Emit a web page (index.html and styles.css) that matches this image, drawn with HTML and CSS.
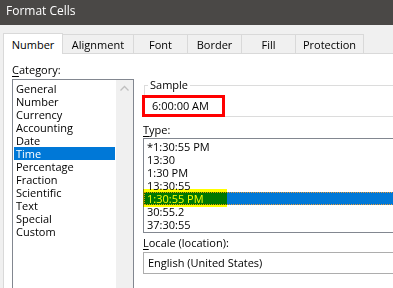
FILE: index.html
```html
<!DOCTYPE html>
<html>
<head>
<meta charset="utf-8">
<link rel="stylesheet" href="styles.css">
</head>
<body>
<div class="dialog">
  <div class="titlebar">Format Cells</div>
  <div class="tabs">
    <div class="tab active t-number">Number</div>
    <div class="tab t-align">Alignment</div>
    <div class="tab t-font">Font</div>
    <div class="tab t-border">Border</div>
    <div class="tab t-fill">Fill</div>
    <div class="tab t-prot last">Protection</div>
  </div>
  <div class="panel">
    <div class="col-left">
      <div class="label"><u>C</u>ategory:</div>
      <div class="listbox cat">
        <ul class="items">
          <li>General</li>
          <li>Number</li>
          <li>Currency</li>
          <li>Accounting</li>
          <li>Date</li>
          <li class="sel">Time</li>
          <li>Percentage</li>
          <li>Fraction</li>
          <li>Scientific</li>
          <li>Text</li>
          <li>Special</li>
          <li>Custom</li>
        </ul>
        <div class="scrollbar">
          <svg class="arrow" width="17" height="17" viewBox="0 0 17 17"><path d="M4.5 10.5 L8.5 6.5 L12.5 10.5" fill="none" stroke="#bfbfbf" stroke-width="1.3"/></svg>
        </div>
      </div>
    </div>
    <div class="col-right">
      <fieldset class="group">
        <legend>Sample</legend>
        <div class="sample">6:00:00 AM</div>
      </fieldset>
      <div class="label type-label"><u>T</u>ype:</div>
      <div class="listbox typelist">
        <ul class="items">
          <li>*1:30:55 PM</li>
          <li>13:30</li>
          <li>1:30 PM</li>
          <li>13:30:55</li>
          <li class="sel focus">1:30:55 PM<span class="highlight"></span></li>
          <li>30:55.2</li>
          <li>37:30:55</li>
        </ul>
      </div>
      <div class="label locale-label"><u>L</u>ocale (location):</div>
      <div class="combo">English (United States)</div>
    </div>
  </div>
</div>
</body>
</html>
```
FILE: styles.css
```css
html, body {
  margin: 0;
  padding: 0;
}
body {
  width: 393px;
  height: 288px;
  overflow: hidden;
  background: #f0f0f0;
  font-family: "Open Sans", "Noto Sans", sans-serif;
  font-size: 11px;
  color: #000;
}
.dialog {
  width: 393px;
  height: 288px;
  overflow: hidden;
  display: flex;
  flex-direction: column;
}
.titlebar {
  height: 25px;
  flex: none;
  background: #4a4846;
  color: #fff;
  font-size: 12px;
  line-height: 22px;
  padding-left: 6px;
  box-sizing: border-box;
}
.tabs {
  flex: none;
  display: flex;
  align-items: flex-end;
  margin-top: 8px;
  padding-left: 3px;
}
.tab {
  box-sizing: border-box;
  height: 19px;
  background: #f0f0f0;
  border-top: 1px solid #d9d9d9;
  border-left: 1px solid #d9d9d9;
  text-align: center;
  line-height: 18px;
  padding-top: 1px;
}
.tab.last {
  border-right: 1px solid #d9d9d9;
}
.tab.active {
  height: 21px;
  background: #fff;
  border-right: 1px solid #d9d9d9;
  margin-bottom: -1px;
  position: relative;
  z-index: 1;
  padding-top: 1px;
  line-height: 19px;
}
.tab.active + .tab {
  border-left: none;
}
.t-number { width: 60px; }
.t-align { width: 70px; }
.t-font { width: 54px; }
.t-border { width: 54px; }
.t-fill { width: 54px; }
.t-prot { width: 69px; }
.panel {
  flex: 1;
  margin-left: 3px;
  background: #fff;
  border-left: 1px solid #d9d9d9;
  border-top: 1px solid #d9d9d9;
  display: flex;
  padding-left: 8px;
}
.label {
  line-height: 14px;
  height: 14px;
  white-space: nowrap;
}
.label u {
  text-decoration-thickness: 1px;
  text-underline-offset: 2px;
}
.col-left {
  width: 122px;
  flex: none;
  padding-top: 9px;
}
.listbox {
  box-sizing: border-box;
  border: 1px solid #828790;
  background: #fff;
  margin-top: 2px;
}
.items {
  list-style: none;
  margin: 0;
  padding: 0;
}
.items li {
  line-height: 13px;
  height: 13px;
  white-space: nowrap;
  position: relative;
}
.cat {
  height: 230px;
  display: flex;
}
.cat .items {
  flex: 1;
  padding-top: 2px;
}
.cat .items li {
  margin: 0 1px;
  padding-left: 2px;
}
.items li.sel {
  background: #0078d7;
  color: #fff;
}
.scrollbar {
  width: 17px;
  flex: none;
  background: #f0f0f0;
}
.arrow {
  display: block;
}
.col-right {
  margin-left: 9px;
  width: 300px;
  flex: none;
  padding-top: 24px;
}
.group {
  margin: 0 0 0 1px;
  padding: 3px 0 0 0;
  border: 1px solid #dcdcdc;
  min-width: 0;
}
.group legend {
  margin-left: 3px;
  padding: 0 2px;
  line-height: 14px;
}
.sample {
  box-sizing: border-box;
  width: 83px;
  height: 22px;
  margin-left: -3px;
  margin-bottom: -1px;
  border: 3px solid #ff0000;
  padding-left: 7px;
  line-height: 16px;
  white-space: nowrap;
}
.type-label {
  margin-top: 6px;
}
.typelist {
  height: 95px;
  margin-top: 1px;
}
.typelist .items {
  padding-top: 1px;
}
.typelist .items li {
  padding-left: 3px;
}
.items li.focus {
  outline: 1px dotted #e89a3a;
  outline-offset: -1px;
}
.highlight {
  position: absolute;
  left: -1px;
  top: -3px;
  width: 84px;
  height: 18px;
  background: #ffff00;
  mix-blend-mode: multiply;
}
.locale-label {
  margin-top: 3px;
}
.combo {
  box-sizing: border-box;
  margin-top: 2px;
  height: 22px;
  border: 1px solid #adadad;
  background: #fff;
  padding-left: 4px;
  line-height: 20px;
  white-space: nowrap;
}
```
